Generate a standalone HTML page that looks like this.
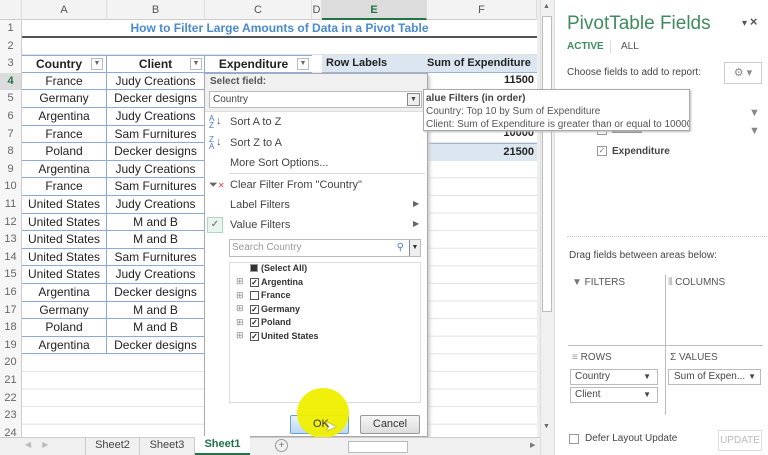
<!DOCTYPE html>
<html><head><meta charset="utf-8">
<style>
*{margin:0;padding:0;box-sizing:border-box}
body{width:768px;height:455px;overflow:hidden;background:#fff;font-family:"Liberation Sans",Arial,sans-serif;position:relative;color:#222}
.a{position:absolute}
.sheet{left:0;top:0;width:540px;height:437px;background:#fff;
background-image:repeating-linear-gradient(to bottom,transparent 0,transparent 16.6px,#e2e2e2 16.6px,#e2e2e2 17.6px);background-position:0 20px;background-size:100% 17.6px}
.colh{top:0;height:20px;background:#f3f3f3;border-bottom:1px solid #ccc;border-right:1px solid #ddd;font-size:11px;color:#555;text-align:center;line-height:20px}
.rn{left:0;width:22px;height:17.6px;font-size:11px;color:#666;text-align:center;line-height:17px;background:#f6f6f6;border-right:1px solid #ccc}
.c{height:17.6px;font-size:12px;text-align:center;line-height:17px;border-right:1px solid #8eaadb;border-bottom:1px solid #8eaadb;color:#222}
.h{font-weight:bold;}
.dd{width:12px;height:12px;border:1px solid #bbb;background:#fff;font-size:7px;line-height:10px;text-align:center;color:#666}
.mi{left:230px;font-size:11px;color:#444}
.chk{width:9px;height:9px;border:1px solid #555;background:#fff;font-size:8px;line-height:8px;text-align:center;font-weight:bold}
.pl{font-size:9px;color:#888}
</style></head><body>
<div class="a sheet"></div>
<div class="a colh" style="left:0;width:22px"></div>
<div class="a colh" style="left:22px;width:85px">A</div>
<div class="a colh" style="left:107px;width:98px">B</div>
<div class="a colh" style="left:205px;width:107px">C</div>
<div class="a colh" style="left:312px;width:10px">D</div>
<div class="a colh" style="left:322px;width:105px;background:#dcdcdc;color:#217346;font-weight:bold;border-bottom:2px solid #217346">E</div>
<div class="a colh" style="left:427px;width:110px">F</div>
<div class="a" style="left:537px;top:0;width:3px;height:437px;background:#eee"></div>
<div class="a rn" style="top:20px">1</div><div class="a rn" style="top:37.6px">2</div><div class="a rn" style="top:55.2px">3</div><div class="a rn" style="top:72.8px;background:#dcdcdc;color:#217346;font-weight:bold">4</div><div class="a rn" style="top:90.4px">5</div><div class="a rn" style="top:108px">6</div><div class="a rn" style="top:125.6px">7</div><div class="a rn" style="top:143.2px">8</div><div class="a rn" style="top:160.8px">9</div><div class="a rn" style="top:178.4px">10</div><div class="a rn" style="top:196px">11</div><div class="a rn" style="top:213.6px">12</div><div class="a rn" style="top:231.2px">13</div><div class="a rn" style="top:248.8px">14</div><div class="a rn" style="top:266.4px">15</div><div class="a rn" style="top:284px">16</div><div class="a rn" style="top:301.6px">17</div><div class="a rn" style="top:319.2px">18</div><div class="a rn" style="top:336.8px">19</div><div class="a rn" style="top:354.4px">20</div><div class="a rn" style="top:372px">21</div><div class="a rn" style="top:389.6px">22</div><div class="a rn" style="top:407.2px">23</div><div class="a rn" style="top:424.8px">24</div>
<div class="a" style="left:22px;top:20px;width:515px;height:17.6px;text-align:center;font-size:12px;font-weight:bold;color:#4a8ad0;line-height:17px;border-bottom:2px solid #555;background:#fff">How to Filter Large Amounts of Data in a Pivot Table</div>
<div class="a" style="left:22px;top:39.6px;width:515px;height:15px;background:#fff;border-bottom:1px solid #e2e2e2"></div>
<div class="a" style="left:22px;top:55.2px;width:290px;height:299px;background:#fff"></div>
<div class="a c h" style="left:22px;top:55.2px;width:85px;border-top:1px solid #8eaadb">Country&nbsp;&nbsp;&nbsp;</div>
<div class="a c h" style="left:107px;top:55.2px;width:98px;border-top:1px solid #8eaadb">Client</div>
<div class="a c h" style="left:205px;top:55.2px;width:107px;border-top:1px solid #8eaadb;border-right:none">Expenditure&nbsp;&nbsp;&nbsp;</div>
<div class="a dd" style="left:91px;top:58px">▼</div><div class="a dd" style="left:190px;top:58px">▼</div><div class="a dd" style="left:297px;top:58px">▼</div>
<div class="a c" style="left:22px;top:72.8px;width:85px">France</div><div class="a c" style="left:107px;top:72.8px;width:98px">Judy Creations</div>
<div class="a c" style="left:22px;top:90.4px;width:85px">Germany</div><div class="a c" style="left:107px;top:90.4px;width:98px">Decker designs</div>
<div class="a c" style="left:22px;top:108px;width:85px">Argentina</div><div class="a c" style="left:107px;top:108px;width:98px">Judy Creations</div>
<div class="a c" style="left:22px;top:125.6px;width:85px">France</div><div class="a c" style="left:107px;top:125.6px;width:98px">Sam Furnitures</div>
<div class="a c" style="left:22px;top:143.2px;width:85px">Poland</div><div class="a c" style="left:107px;top:143.2px;width:98px">Decker designs</div>
<div class="a c" style="left:22px;top:160.8px;width:85px">Argentina</div><div class="a c" style="left:107px;top:160.8px;width:98px">Judy Creations</div>
<div class="a c" style="left:22px;top:178.4px;width:85px">France</div><div class="a c" style="left:107px;top:178.4px;width:98px">Sam Furnitures</div>
<div class="a c" style="left:22px;top:196px;width:85px">United States</div><div class="a c" style="left:107px;top:196px;width:98px">Judy Creations</div>
<div class="a c" style="left:22px;top:213.6px;width:85px">United States</div><div class="a c" style="left:107px;top:213.6px;width:98px">M and B</div>
<div class="a c" style="left:22px;top:231.2px;width:85px">United States</div><div class="a c" style="left:107px;top:231.2px;width:98px">M and B</div>
<div class="a c" style="left:22px;top:248.8px;width:85px">United States</div><div class="a c" style="left:107px;top:248.8px;width:98px">Sam Furnitures</div>
<div class="a c" style="left:22px;top:266.4px;width:85px">United States</div><div class="a c" style="left:107px;top:266.4px;width:98px">Judy Creations</div>
<div class="a c" style="left:22px;top:284px;width:85px">Argentina</div><div class="a c" style="left:107px;top:284px;width:98px">Decker designs</div>
<div class="a c" style="left:22px;top:301.6px;width:85px">Germany</div><div class="a c" style="left:107px;top:301.6px;width:98px">M and B</div>
<div class="a c" style="left:22px;top:319.2px;width:85px">Poland</div><div class="a c" style="left:107px;top:319.2px;width:98px">M and B</div>
<div class="a c" style="left:22px;top:336.8px;width:85px">Argentina</div><div class="a c" style="left:107px;top:336.8px;width:98px">Decker designs</div>
<div class="a" style="left:322px;top:55.2px;width:215px;height:17.6px;background:#dce6f1;border-bottom:1px solid #9bb3d8;font-size:11px;font-weight:bold;line-height:17px;padding-left:4px">Row Labels<span style="position:absolute;left:105px">Sum of Expenditure</span></div>
<div class="a" style="left:427px;top:74px;width:107px;font-size:11px;font-weight:bold;text-align:right">11500</div>
<div class="a" style="left:427px;top:127px;width:107px;font-size:11px;font-weight:bold;text-align:right">10000</div>
<div class="a" style="left:322px;top:143.2px;width:215px;height:17.6px;background:#dce6f1;border-top:1px solid #9bb3d8;font-size:11px;font-weight:bold;line-height:17px;text-align:right;padding-right:3px">21500</div>
<!-- popup -->
<div class="a" style="left:204px;top:73px;width:224px;height:364px;background:#fff;border:1px solid #aaa;box-shadow:2px 2px 3px #ccc"></div>
<div class="a" style="left:205px;top:74px;width:222px;height:38px;background:#f0f0f0;border-bottom:1px solid #ddd"></div>
<div class="a" style="left:210px;top:76px;font-size:10px;font-weight:bold;color:#555">Select field:</div>
<div class="a" style="left:209px;top:91px;width:213px;height:17px;background:#fff;border:1px solid #bbb;font-size:10px;color:#444;line-height:15px;padding-left:3px">Country<div class="a" style="right:1px;top:1px;width:13px;height:13px;border:1px solid #888;background:#eee;font-size:7px;text-align:center;line-height:12px">▼</div></div>
<div class="a" style="left:209px;top:115px;font-size:8px;color:#4a7bc0;line-height:7px">A<br>Z</div><div class="a" style="left:216px;top:115px;font-size:11px;color:#555">↓</div>
<div class="a mi" style="top:116px">Sort A to Z</div>
<div class="a" style="left:209px;top:136px;font-size:8px;color:#4a7bc0;line-height:7px">Z<br>A</div><div class="a" style="left:216px;top:136px;font-size:11px;color:#555">↓</div>
<div class="a mi" style="top:137px">Sort Z to A</div>
<div class="a mi" style="top:157px">More Sort Options...</div>
<div class="a" style="left:229px;top:173px;width:196px;height:1px;background:#ddd"></div>
<div class="a" style="left:209px;top:179px;font-size:11px;color:#666">⏷<span style="color:#d44;font-size:8px">✕</span></div>
<div class="a mi" style="top:179px">Clear Filter From "Country"</div>
<div class="a mi" style="top:199px">Label Filters</div><div class="a" style="left:413px;top:199px;font-size:8px;color:#666">▶</div>
<div class="a" style="left:207px;top:217px;width:16px;height:16px;border:1px solid #a8d8c0;background:#e8f4ec;font-size:10px;text-align:center;color:#666;line-height:14px">✓</div>
<div class="a mi" style="top:219px">Value Filters</div><div class="a" style="left:413px;top:219px;font-size:8px;color:#666">▶</div>
<div class="a" style="left:229px;top:239px;width:192px;height:18px;border:1px solid #bbb;font-size:10px;color:#999;line-height:16px;padding-left:2px">Search Country<span style="position:absolute;right:16px;top:0;color:#4a7bc0">⚲</span><div class="a" style="right:0;top:0;width:11px;height:16px;border-left:1px solid #888;background:#eee;font-size:7px;color:#333;text-align:center;line-height:16px">▼</div></div>
<div class="a" style="left:229px;top:262px;width:192px;height:141px;border:1px solid #ddd"></div>
<div class="a" style="left:250px;top:264px;width:8px;height:8px;background:#333;border:1px solid #999"></div><div class="a" style="left:261px;top:263px;font-size:9px;font-weight:bold;color:#333">(Select All)</div>
<div class="a pl" style="left:236px;top:276px">⊞</div><div class="a chk" style="left:250px;top:278px">✓</div><div class="a" style="left:261px;top:277px;font-size:9px;font-weight:bold;color:#333">Argentina</div>
<div class="a pl" style="left:236px;top:290px">⊞</div><div class="a chk" style="left:250px;top:291px"></div><div class="a" style="left:261px;top:290px;font-size:9px;font-weight:bold;color:#333">France</div>
<div class="a pl" style="left:236px;top:303px">⊞</div><div class="a chk" style="left:250px;top:305px">✓</div><div class="a" style="left:261px;top:304px;font-size:9px;font-weight:bold;color:#333">Germany</div>
<div class="a pl" style="left:236px;top:317px">⊞</div><div class="a chk" style="left:250px;top:318px">✓</div><div class="a" style="left:261px;top:317px;font-size:9px;font-weight:bold;color:#333">Poland</div>
<div class="a pl" style="left:236px;top:330px">⊞</div><div class="a chk" style="left:250px;top:332px">✓</div><div class="a" style="left:261px;top:331px;font-size:9px;font-weight:bold;color:#333">United States</div>
<div class="a" style="left:290px;top:415px;width:59px;height:19px;border:1px solid #6a9fd8;border-radius:2px;background:linear-gradient(#e6f1fb,#bcd8f2)"></div>
<div class="a" style="left:297px;top:388px;width:52px;height:50px;border-radius:50%;background:#f0ef00;opacity:.95"></div>
<div class="a" style="left:313px;top:418px;font-size:11px;color:#333">OK</div>
<div class="a" style="left:325px;top:418px;font-size:14px;color:#fff;text-shadow:0 0 1px #000">➤</div>
<div class="a" style="left:360px;top:415px;width:60px;height:19px;border:1px solid #999;border-radius:2px;background:linear-gradient(#f6f6f6,#ddd);font-size:11px;text-align:center;line-height:17px;color:#333">Cancel</div>
<!-- tabs -->
<div class="a" style="left:0;top:437px;width:540px;height:18px;background:#f0f0f0;border-top:1px solid #ccc"></div>
<div class="a" style="left:25px;top:440px;font-size:8px;color:#bbb">◀ &nbsp;&nbsp;&nbsp; ▶</div>
<div class="a" style="left:85px;top:437px;width:55px;height:18px;border-left:1px solid #ccc;border-right:1px solid #ccc;font-size:11px;text-align:center;line-height:17px;color:#444">Sheet2</div>
<div class="a" style="left:140px;top:437px;width:55px;height:18px;border-right:1px solid #ccc;font-size:11px;text-align:center;line-height:17px;color:#444">Sheet3</div>
<div class="a" style="left:195px;top:436px;width:55px;height:19px;background:#fff;border-bottom:2px solid #217346;font-size:11px;text-align:center;line-height:17px;color:#217346;font-weight:bold">Sheet1</div>
<div class="a" style="left:275px;top:439px;width:13px;height:13px;border:1px solid #999;border-radius:50%;font-size:10px;line-height:11px;text-align:center;color:#777">+</div>
<div class="a" style="left:348px;top:441px;width:60px;height:12px;border:1px solid #bbb;background:#fff"></div>
<div class="a" style="left:530px;top:441px;font-size:7px;color:#777">▶</div>
<!-- vscroll -->
<div class="a" style="left:540px;top:0;width:14px;height:455px;background:#f0f0f0;border-left:1px solid #ddd"></div>
<div class="a" style="left:542px;top:16px;width:10px;height:296px;background:#fff;border:1px solid #bbb"></div>
<div class="a" style="left:543px;top:3px;font-size:7px;color:#666">▲</div>
<div class="a" style="left:543px;top:423px;font-size:7px;color:#666">▼</div>
<!-- panel -->
<div class="a" style="left:554px;top:0;width:214px;height:455px;background:#fff;border-left:1px solid #ddd"></div>
<div class="a" style="left:567px;top:13px;font-size:19px;color:#3f8a5f">PivotTable Fields</div>
<div class="a" style="left:742px;top:14px;font-size:10px;color:#555">▾ <b style="font-size:13px">×</b></div>
<div class="a" style="left:567px;top:41px;font-size:10px;font-weight:bold;color:#3f8a5f">ACTIVE</div>
<div class="a" style="left:610px;top:40px;width:1px;height:14px;background:#ddd"></div>
<div class="a" style="left:621px;top:41px;font-size:10px;color:#555">ALL</div>
<div class="a" style="left:567px;top:67px;font-size:10px;color:#444">Choose fields to add to report:</div>
<div class="a" style="left:724px;top:62px;width:38px;height:22px;border:1px solid #ccc;font-size:11px;color:#888;text-align:center;line-height:20px">⚙ ▾</div>
<div class="a" style="left:749px;top:107px;font-size:11px;color:#888">▼</div>
<div class="a" style="left:749px;top:125px;font-size:11px;color:#888">▼</div>
<div class="a" style="left:597px;top:129px;width:10px;height:6px;border:1px solid #999;border-top:none"></div>
<div class="a" style="left:612px;top:129px;width:30px;height:4px;background:#888"></div>
<div class="a" style="left:597px;top:146px;width:10px;height:10px;border:1px solid #999;font-size:8px;line-height:8px;text-align:center;color:#777">✓</div>
<div class="a" style="left:612px;top:146px;font-size:10px;font-weight:bold;color:#444">Expenditure</div>
<div class="a" style="left:567px;top:236px;width:200px;border-top:1px dotted #ccc"></div>
<div class="a" style="left:569px;top:250px;font-size:10px;color:#444">Drag fields between areas below:</div>
<div class="a" style="left:572px;top:277px;font-size:10px;color:#555"><span style="color:#777">▼</span> FILTERS</div>
<div class="a" style="left:668px;top:277px;font-size:10px;color:#555"><span style="color:#999">⦀</span> COLUMNS</div>
<div class="a" style="left:665px;top:275px;width:1px;height:140px;background:#bbb"></div>
<div class="a" style="left:568px;top:345px;width:195px;height:1px;background:#bbb"></div>
<div class="a" style="left:572px;top:352px;font-size:10px;color:#555"><span style="color:#999">≡</span> ROWS</div>
<div class="a" style="left:670px;top:352px;font-size:10px;color:#555">Σ VALUES</div>
<div class="a" style="left:570px;top:369px;width:88px;height:16px;border:1px solid #bbb;font-size:10px;color:#444;line-height:14px;padding-left:4px">Country<span style="position:absolute;right:6px;font-size:8px">▼</span></div>
<div class="a" style="left:570px;top:387px;width:88px;height:16px;border:1px solid #bbb;font-size:10px;color:#444;line-height:14px;padding-left:4px">Client<span style="position:absolute;right:6px;font-size:8px">▼</span></div>
<div class="a" style="left:668px;top:369px;width:93px;height:16px;border:1px solid #bbb;font-size:10px;color:#444;line-height:14px;padding-left:5px">Sum of Expen...<span style="position:absolute;right:4px;font-size:8px">▼</span></div>
<div class="a" style="left:569px;top:434px;width:10px;height:10px;border:1px solid #999"></div>
<div class="a" style="left:585px;top:433px;font-size:10px;color:#444">Defer Layout Update</div>
<div class="a" style="left:718px;top:430px;width:44px;height:21px;border:1px solid #ddd;font-size:10px;color:#bbb;text-align:center;line-height:19px">UPDATE</div>
<!-- tooltip (on top) -->
<div class="a" style="left:423px;top:89px;width:267px;height:42px;background:#fff;border:1px solid #aaa;box-shadow:1px 1px 2px #bbb;font-size:10px;color:#555;line-height:13px;padding:2px 0 0 2px;white-space:nowrap;overflow:hidden">
<b style="color:#444">alue Filters (in order)</b><br>Country: Top 10 by Sum of Expenditure<br>Client: Sum of Expenditure is greater than or equal to 10000</div>
</body></html>
